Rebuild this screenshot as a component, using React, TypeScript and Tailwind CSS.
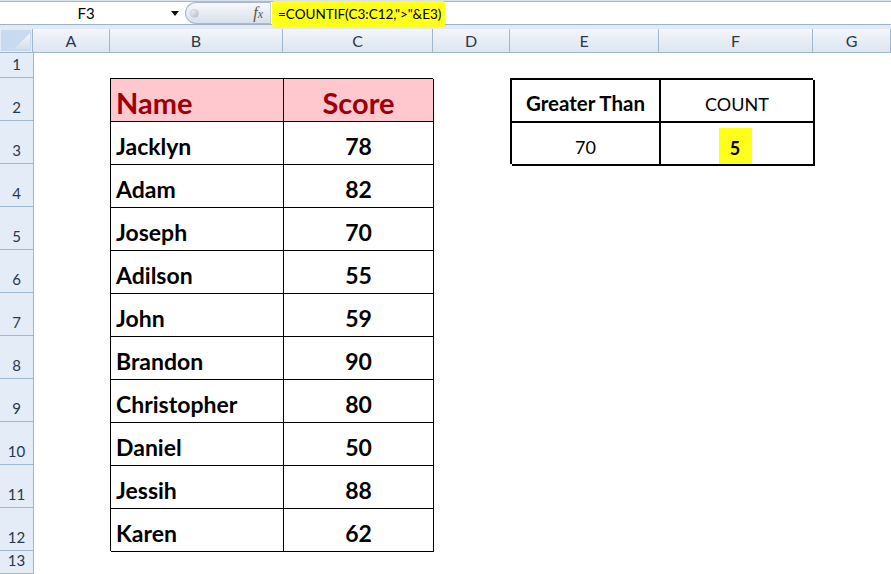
import React from 'react'

const cols = [
    { label: 'A', w: 'w-[77px]' },
    { label: 'B', w: 'w-[173px]' },
    { label: 'C', w: 'w-[150px]' },
    { label: 'D', w: 'w-[77px]' },
    { label: 'E', w: 'w-[149px]' },
    { label: 'F', w: 'w-[154px]' },
    { label: 'G', w: 'flex-1' },
]

const rowHeights = [
    'h-[25px]', 'h-[43px]', 'h-[43px]', 'h-[43px]', 'h-[43px]', 'h-[43px]', 'h-[43px]',
    'h-[43px]', 'h-[43px]', 'h-[43px]', 'h-[43px]', 'h-[43px]', 'h-[23px]',
]

const scores = [
    { name: 'Jacklyn', score: 78 },
    { name: 'Adam', score: 82 },
    { name: 'Joseph', score: 70 },
    { name: 'Adilson', score: 55 },
    { name: 'John', score: 59 },
    { name: 'Brandon', score: 90 },
    { name: 'Christopher', score: 80 },
    { name: 'Daniel', score: 50 },
    { name: 'Jessih', score: 88 },
    { name: 'Karen', score: 62 },
]

function FormulaBar() {
    return (
        <div className="h-[29px] flex flex-col bg-[#e3e9f2]">
            <div className="h-[2px] bg-[#d9e1ec] border-b border-[#a7b9cf]" />
            <div className="h-[23px] flex bg-white border-b border-[#9db3cc]">
                <div className="w-[185px] flex items-center">
                    <span className="w-[172px] text-center text-[15px] text-black">F3</span>
                    <svg width="8" height="5" viewBox="0 0 8 5" className="ml-[-1px]">
                        <polygon points="0,0 8,0 4,5" fill="#111" />
                    </svg>
                </div>
                <div className="w-[85px] h-[22px] flex items-center rounded-l-full border border-r-0 border-[#a9b9ce] bg-gradient-to-b from-[#f7f9fc] to-[#d9e0ea]">
                    <span className="ml-[4px] w-[9px] h-[9px] rounded-full bg-gradient-to-br from-[#f4f5f7] to-[#b4bcc6] border border-[#c8ced6]" />
                    <span className="ml-auto mr-[7px] text-[16px] italic text-[#555] font-['Liberation_Serif',serif] leading-none">
                        f<span className="text-[12px]">x</span>
                    </span>
                </div>
                <div className="flex-1 flex items-start border-l border-[#c3cedc]">
                    <span className="ml-[1px] h-[26px] -mt-[1px] flex items-center pl-[6px] pr-[4px] bg-[#ffff1a] rounded-[3px] text-[13.5px] text-black">
                        =COUNTIF(C3:C12,"&gt;"&amp;E3)
                    </span>
                </div>
            </div>
            <div className="h-[4px]" />
        </div>
    )
}

function ColumnHeader() {
    return (
        <div className="h-[24px] flex border-b border-[#9eb6ce] bg-gradient-to-b from-[#f3f6fb] to-[#dde5f0]">
            <div className="w-[33px] relative border-r border-[#9eb6ce] bg-[#c9d9ef]">
                <svg width="33" height="24" viewBox="0 0 33 24" className="absolute inset-0">
                    <defs>
                        <linearGradient id="tri" x1="0" y1="0" x2="0" y2="1">
                            <stop offset="0" stopColor="#f4f7fb" />
                            <stop offset="1" stopColor="#d6deea" />
                        </linearGradient>
                    </defs>
                    <rect x="0.5" y="0.5" width="31" height="22" fill="none" stroke="#e2ebf7" />
                    <polygon points="14,20 30,4 30,20" fill="url(#tri)" />
                </svg>
            </div>
            {cols.map((c) => (
                <div key={c.label} className={`${c.w} flex items-center justify-center border-r border-[#9eb6ce] text-[16px] text-[#27384d]`}>
                    {c.label}
                </div>
            ))}
        </div>
    )
}

function RowHeaders() {
    return (
        <div className="w-[34px] flex flex-col bg-[#e4ecf7] border-r border-[#9eb6ce]">
            {rowHeights.map((h, i) => (
                <div key={i} className={`${h} shrink-0 flex items-end justify-center pb-[5px] border-b border-[#9eb6ce] text-[15px] leading-none text-[#27384d]`}>
                    {i + 1}
                </div>
            ))}
        </div>
    )
}

function ScoreTable() {
    return (
        <div className="col-start-2 col-span-2 row-start-2 row-span-11 grid grid-cols-[173px_150px] grid-rows-[repeat(11,43px)] border-l border-t border-black">
            <div className="flex items-end pb-[4px] pl-[5px] bg-[#ffc7ce] border-r border-b border-black text-[29px] font-bold leading-none text-[#9c0006]">Name</div>
            <div className="flex items-end justify-center pb-[4px] bg-[#ffc7ce] border-r border-b border-black text-[29px] font-bold leading-none text-[#9c0006]">Score</div>
            {scores.map((s) => (
                <React.Fragment key={s.name}>
                    <div className="flex items-end pb-[6px] pl-[5px] border-r border-b border-black text-[23px] font-bold leading-none text-black">{s.name}</div>
                    <div className="flex items-end justify-center pb-[6px] border-r border-b border-black text-[23px] font-bold leading-none text-black">{s.score}</div>
                </React.Fragment>
            ))}
        </div>
    )
}

function CountTable() {
    return (
        <div className="col-start-5 col-span-2 row-start-2 row-span-2 grid grid-cols-[149px_154px] grid-rows-[43px_43px] border-l-2 border-t-2 border-black">
            <div className="flex items-end justify-center pb-[8px] border-r-2 border-b-2 border-black text-[20.5px] font-bold leading-none text-black">Greater Than</div>
            <div className="flex items-end justify-center pb-[8px] border-r-2 border-b-2 border-black text-[18px] leading-none text-black">COUNT</div>
            <div className="flex items-end justify-center pb-[8px] border-r-2 border-b-2 border-black text-[18px] leading-none text-black">70</div>
            <div className="flex items-end justify-center pr-[4px] border-r-2 border-b-2 border-black">
                <span className="w-[33px] h-[36px] flex items-end justify-center pb-[7px] bg-[#ffff1a] text-[18px] font-bold leading-none text-black">5</span>
            </div>
        </div>
    )
}

export default function App() {
    return (
        <div className="w-[891px] h-[574px] overflow-hidden bg-white font-['Lato','Noto_Sans',sans-serif] select-none">
            <FormulaBar />
            <ColumnHeader />
            <div className="flex">
                <RowHeaders />
                <div className="flex-1 grid grid-cols-[76px_173px_150px_77px_149px_154px_1fr] grid-rows-[25px_repeat(11,43px)_23px]">
                    <ScoreTable />
                    <CountTable />
                </div>
            </div>
        </div>
    )
}
